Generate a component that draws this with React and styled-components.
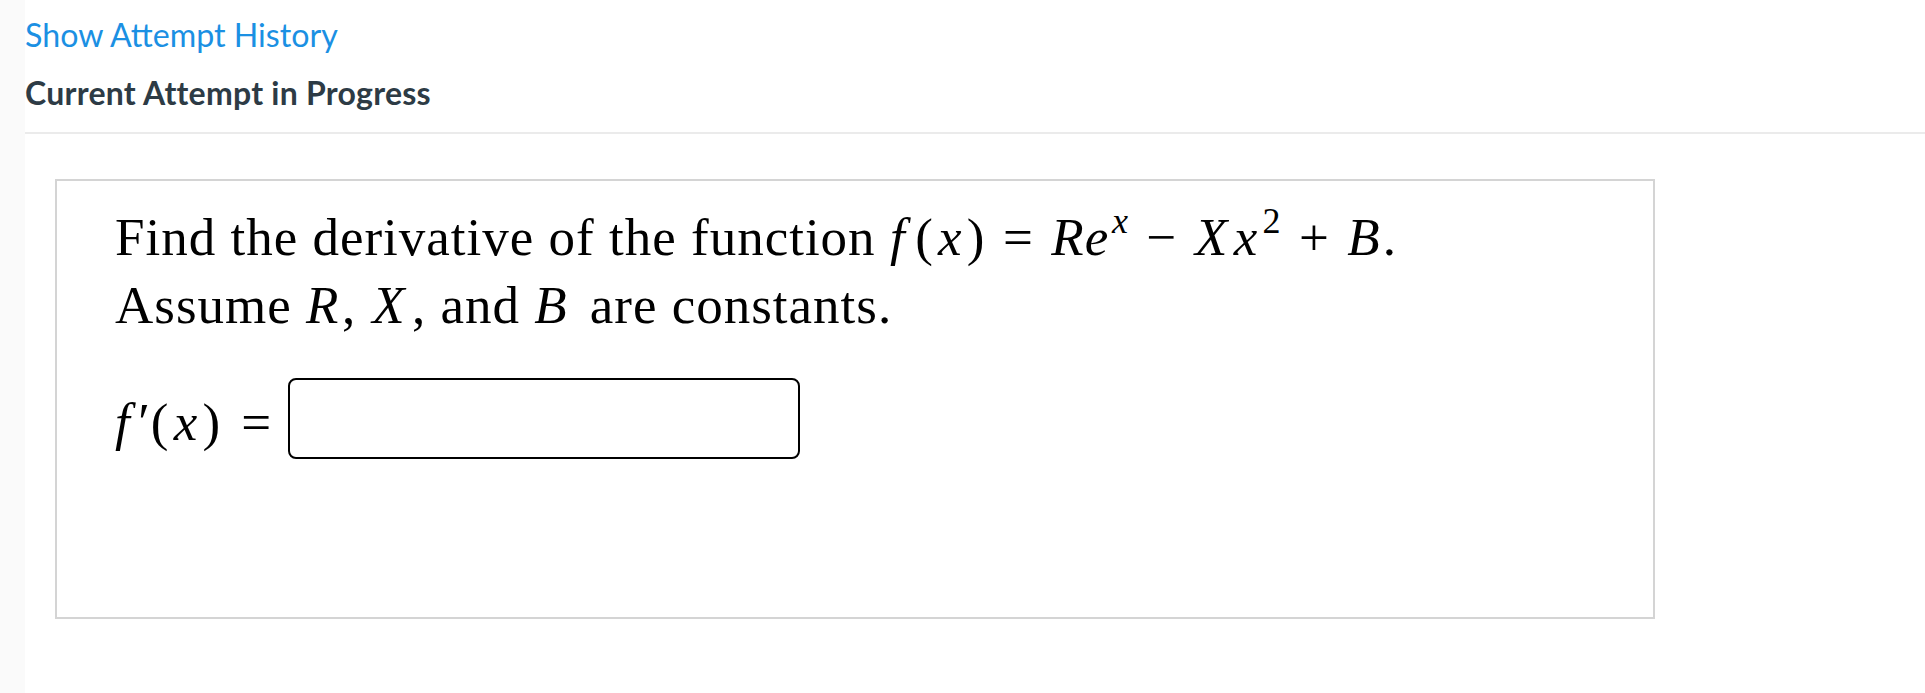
import React from "react";
import styled, { createGlobalStyle } from "styled-components";

const GlobalStyle = createGlobalStyle`
  html, body {
    margin: 0;
    padding: 0;
    background: #ffffff;
  }
`;

const Page = styled.div`
  display: flex;
  min-height: 100vh;
  font-family: Lato, "Liberation Sans", sans-serif;
`;

const SideStrip = styled.div`
  width: 25px;
  flex-shrink: 0;
  background: #fafafa;
`;

const Main = styled.main`
  flex: 1;
  min-width: 0;
`;

const Header = styled.header`
  padding-top: 16px;
  border-bottom: 2px solid #ebebeb;
  padding-bottom: 20px;
`;

const HistoryLink = styled.a`
  display: block;
  width: max-content;
  font-size: 32.2px;
  line-height: 1.2;
  color: #1b90e3;
  text-decoration: none;
  cursor: pointer;
`;

const AttemptTitle = styled.h2`
  margin: 19px 0 0;
  font-size: 32px;
  font-weight: 700;
  line-height: 1.2;
  letter-spacing: 0.25px;
  color: #2d3b45;
`;

const QuestionCard = styled.section`
  box-sizing: border-box;
  width: 1600px;
  height: 440px;
  margin: 45px 0 0 30px;
  border: 2px solid #d4d4d4;
  padding: 22px 0 0 58px;
  font-family: "Liberation Serif", "Times New Roman", serif;
  font-size: 53px;
  line-height: 68px;
  letter-spacing: 1px;
  color: #000;
`;

const Prompt = styled.p`
  margin: 0;
`;

const V = styled.i`
  font-style: italic;
  margin-left: ${(p) => p.$l || "0"};
  margin-right: ${(p) => p.$r || "0"};
`;

const Op = styled.span`
  margin-left: ${(p) => p.$l || "0.33em"};
  margin-right: ${(p) => p.$r || "0.33em"};
`;

const Sup = styled.sup`
  font-size: 0.68em;
  line-height: 0;
  vertical-align: 0.6em;
  margin-left: ${(p) => p.$l || "0.08em"};
`;

const AnswerRow = styled.div`
  display: flex;
  align-items: center;
  margin-top: 39px;
`;

const Label = styled.span`
  line-height: 1;
  padding-top: 8px;
`;

const AnswerInput = styled.input`
  box-sizing: border-box;
  width: 512px;
  height: 81px;
  border: 2px solid #000;
  border-radius: 8px;
  background: #fff;
  font-family: "Liberation Serif", serif;
  font-size: 40px;
  padding: 0 12px;
  outline: none;
`;

export default function App() {
  return (
    <>
      <GlobalStyle />
      <Page>
        <SideStrip />
        <Main>
          <Header>
            <HistoryLink>Show Attempt History</HistoryLink>
            <AttemptTitle>Current Attempt in Progress</AttemptTitle>
          </Header>
          <QuestionCard>
            <Prompt>
              Find the derivative of the function <V $r="0.18em">f</V>(
              <V $l="0.08em" $r="0.08em">x</V>)
              <Op>=</Op>
              <V>R</V>
              <V>e</V>
              <Sup>
                <V>x</V>
              </Sup>
              <Op>−</Op>
              <V $r="0.1em">X</V>
              <V>x</V>
              <Sup $l="0.12em">2</Sup>
              <Op>+</Op>
              <V $r="0.04em">B</V>.
            </Prompt>
            <Prompt>
              Assume <V $r="0.05em">R</V>,<Op $l="0.15em" $r="0.15em" />
              <V $r="0.12em">X</V>, and <V $r="0.15em">B</V> are constants.
            </Prompt>
            <AnswerRow>
              <Label>
                <V $r="0.14em">f</V>′(<V $l="0.08em" $r="0.08em">x</V>)
                <Op $l="0.38em" $r="0.3em">=</Op>
              </Label>
              <AnswerInput type="text" aria-label="f prime of x" />
            </AnswerRow>
          </QuestionCard>
        </Main>
      </Page>
    </>
  );
}
